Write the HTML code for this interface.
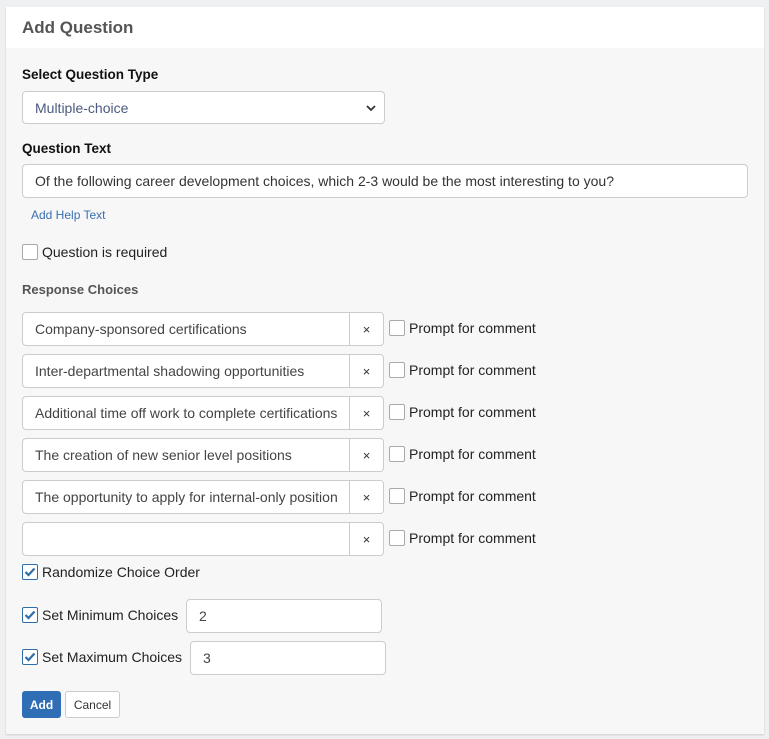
<!DOCTYPE html>
<html><head><style>
*{box-sizing:border-box;margin:0;padding:0}
body{width:769px;height:739px;background:#eef0f2;font-family:"Liberation Sans",Arial,sans-serif;color:#333;position:relative;overflow:hidden}
.panel{position:absolute;left:6px;top:7px;width:758px;height:727px;background:#f7f7f7;box-shadow:0 1px 2px rgba(0,0,0,.15)}
.hdr{height:41px;background:#fff;padding:11px 16px 0;font-size:17px;font-weight:bold;color:#555}
.a{position:absolute}
.lbl{font-size:13.5px;font-weight:bold;color:#111}
.box{background:#fff;border:1px solid #ccc;border-radius:4px;font-size:14px;color:#444;padding:0 12px;display:flex;align-items:center}
.cb{width:16px;height:16px;border:1px solid #aaa;border-radius:2px;background:#fff}
.cbc{width:16px;height:16px;border:1px solid #2f6ea8;border-radius:2px;background:#fff;display:flex;align-items:center;justify-content:center}
.t{font-size:14px;color:#222}
.x{position:absolute;right:0;top:0;width:34px;height:100%;border-left:1px solid #ccc;display:flex;align-items:center;justify-content:center;font-size:13px;color:#333}
</style></head><body>
<div class="panel"><div class="hdr">Add Question</div></div>
<div class="a lbl" style="left:22px;top:67px">Select Question Type</div>
<div class="a box" style="left:22px;top:91px;width:363px;height:33px;color:#4a5a80">Multiple-choice
<svg style="position:absolute;right:8px;top:12px" width="10" height="8" viewBox="0 0 10 8"><path d="M1 2l4 4 4-4" stroke="#333" stroke-width="1.8" fill="none"/></svg></div>
<div class="a lbl" style="left:22px;top:141px">Question Text</div>
<div class="a box" style="left:22px;top:164px;width:726px;height:34px;color:#333">Of the following career development choices, which 2-3 would be the most interesting to you?</div>
<div class="a" style="left:31px;top:208px;font-size:12px;color:#3a6fb0">Add Help Text</div>
<div class="a cb" style="left:22px;top:244px"></div>
<div class="a t" style="left:42px;top:244px">Question is required</div>
<div class="a" style="left:22px;top:282px;font-size:13px;font-weight:bold;color:#555">Response Choices</div>

<div class="a box" style="left:22px;top:312px;width:362px;height:34px">Company-sponsored certifications<div class="x">×</div></div>
<div class="a cb" style="left:389px;top:320px"></div><div class="a t" style="left:409px;top:320px">Prompt for comment</div>
<div class="a box" style="left:22px;top:354px;width:362px;height:34px">Inter-departmental shadowing opportunities<div class="x">×</div></div>
<div class="a cb" style="left:389px;top:362px"></div><div class="a t" style="left:409px;top:362px">Prompt for comment</div>
<div class="a box" style="left:22px;top:396px;width:362px;height:34px">Additional time off work to complete certifications<div class="x">×</div></div>
<div class="a cb" style="left:389px;top:404px"></div><div class="a t" style="left:409px;top:404px">Prompt for comment</div>
<div class="a box" style="left:22px;top:438px;width:362px;height:34px">The creation of new senior level positions<div class="x">×</div></div>
<div class="a cb" style="left:389px;top:446px"></div><div class="a t" style="left:409px;top:446px">Prompt for comment</div>
<div class="a box" style="left:22px;top:480px;width:362px;height:34px;white-space:nowrap;overflow:hidden">The opportunity to apply for internal-only position<div class="x" style="background:#fff">×</div></div>
<div class="a cb" style="left:389px;top:488px"></div><div class="a t" style="left:409px;top:488px">Prompt for comment</div>
<div class="a box" style="left:22px;top:522px;width:362px;height:34px"><div class="x">×</div></div>
<div class="a cb" style="left:389px;top:530px"></div><div class="a t" style="left:409px;top:530px">Prompt for comment</div>

<div class="a cbc" style="left:22px;top:564px"><svg width="12" height="10" viewBox="0 0 12 10"><path d="M1.5 5l3 3 6-6.5" stroke="#2f6ea8" stroke-width="2.2" fill="none"/></svg></div>
<div class="a t" style="left:42px;top:564px">Randomize Choice Order</div>
<div class="a cbc" style="left:22px;top:607px"><svg width="12" height="10" viewBox="0 0 12 10"><path d="M1.5 5l3 3 6-6.5" stroke="#2f6ea8" stroke-width="2.2" fill="none"/></svg></div>
<div class="a t" style="left:42px;top:607px">Set Minimum Choices</div>
<div class="a box" style="left:186px;top:599px;width:196px;height:34px">2</div>
<div class="a cbc" style="left:22px;top:649px"><svg width="12" height="10" viewBox="0 0 12 10"><path d="M1.5 5l3 3 6-6.5" stroke="#2f6ea8" stroke-width="2.2" fill="none"/></svg></div>
<div class="a t" style="left:42px;top:649px">Set Maximum Choices</div>
<div class="a box" style="left:190px;top:641px;width:196px;height:34px">3</div>

<div class="a" style="left:22px;top:691px;width:39px;height:27px;background:#2f6eb5;border-radius:3px;color:#fff;font-size:12px;font-weight:bold;display:flex;align-items:center;justify-content:center">Add</div>
<div class="a" style="left:65px;top:691px;width:55px;height:27px;background:#fff;border:1px solid #ccc;border-radius:3px;color:#333;font-size:12px;display:flex;align-items:center;justify-content:center">Cancel</div>
</body></html>
